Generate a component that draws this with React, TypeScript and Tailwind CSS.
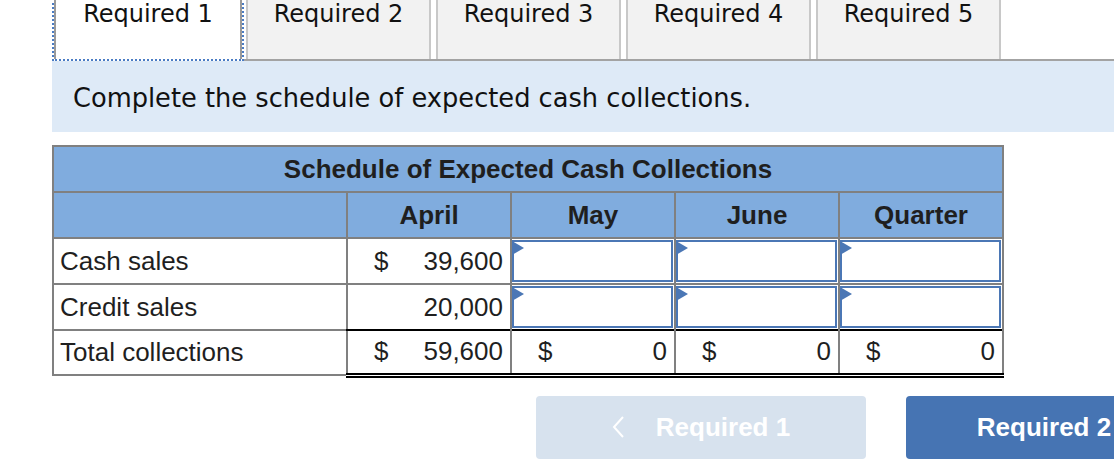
const tabs = ["Required 2", "Required 3", "Required 4", "Required 5"];
const months = ["April", "May", "June", "Quarter"];

const InputCell = () => (
  <td className="h-[46px] border-2 border-[#808080] p-0">
    <div className="relative mr-[1px] h-[42px] border-2 border-[#4b77b5] bg-white">
      <span className="absolute -left-[2px] -top-[1px] block h-0 w-0 border-y-[7px] border-l-[12px] border-y-transparent border-l-[#4b77b5]" />
    </div>
  </td>
);

const AmountCell = ({ dollar, value, total }: { dollar?: boolean; value: string; total?: boolean }) => (
  <td
    className={
      total
        ? "h-[45px] border-x-2 border-t-2 border-b-[5px] border-x-[#808080] border-t-black border-b-black border-double p-0"
        : "h-[46px] border-2 border-[#808080] p-0"
    }
  >
    <div className="flex items-center justify-between pl-[26px] pr-[7px]">
      <span>{dollar ? "$" : ""}</span>
      <span>{value}</span>
    </div>
  </td>
);

export default function App() {
  return (
    <div className="h-[466px] w-[1114px] overflow-hidden bg-white">
      <div className="w-[1236px] pl-[52px]">
        {/* tabs */}
        <div className="flex h-[61px] items-start font-['DejaVu_Sans',sans-serif] text-[24px] leading-[27px] text-[#111]">
          <div className="relative z-10 ml-[2px] h-[59px] w-[188px] border-x-2 border-[#9a9a9a] bg-white pt-[1px] text-center outline-2 outline-dotted outline-[#4a7cc4]">
            Required 1
          </div>
          <div className="flex h-[61px] flex-1 gap-[5px] border-b-2 border-[#a3a3a3] pl-[4px]">
            {tabs.map((t) => (
              <div key={t} className="h-full w-[185px] border-x-2 border-[#c8c8c8] bg-[#f2f2f2] pt-[1px] text-center">
                {t}
              </div>
            ))}
          </div>
        </div>

        {/* instruction */}
        <div className="flex h-[71px] items-center bg-[#deeaf7] pt-[3px] pl-[21px] font-['DejaVu_Sans',sans-serif] text-[25.7px] text-[#111]">
          Complete the schedule of expected cash collections.
        </div>

        {/* schedule */}
        <table className="mt-[13px] w-[950px] table-fixed border-collapse font-['Liberation_Sans',Arial,sans-serif] text-[26px] text-[#1f1f1f]">
          <colgroup>
            <col className="w-[294px]" />
            <col className="w-[164px]" />
            <col className="w-[164px]" />
            <col className="w-[164px]" />
            <col className="w-[164px]" />
          </colgroup>
          <tbody>
            <tr>
              <td colSpan={5} className="h-[46px] border-2 border-[#808080] bg-[#80acde] text-center font-bold">
                Schedule of Expected Cash Collections
              </td>
            </tr>
            <tr>
              <td className="h-[46px] border-2 border-[#808080] bg-[#80acde]" />
              {months.map((m) => (
                <td key={m} className="h-[46px] border-2 border-[#808080] bg-[#80acde] text-center font-bold">
                  {m}
                </td>
              ))}
            </tr>
            <tr>
              <td className="h-[46px] border-2 border-[#808080] pl-[6px]">Cash sales</td>
              <AmountCell dollar value="39,600" />
              <InputCell />
              <InputCell />
              <InputCell />
            </tr>
            <tr>
              <td className="h-[46px] border-2 border-[#808080] pl-[6px]">Credit sales</td>
              <AmountCell value="20,000" />
              <InputCell />
              <InputCell />
              <InputCell />
            </tr>
            <tr>
              <td className="h-[45px] border-2 border-[#808080] pl-[6px]">Total collections</td>
              <AmountCell dollar total value="59,600" />
              <AmountCell dollar total value="0" />
              <AmountCell dollar total value="0" />
              <AmountCell dollar total value="0" />
            </tr>
          </tbody>
        </table>

        {/* navigation */}
        <div className="mt-[18px] flex justify-end gap-[40px] font-['Liberation_Sans',Arial,sans-serif] text-[26px] font-bold text-white">
          <button className="flex h-[63px] w-[330px] items-center justify-center gap-[31px] rounded-[4px] bg-[#d7e2ee]">
            <svg width="13" height="22" viewBox="0 0 13 22" fill="none">
              <polyline points="11,1 2,11 11,21" stroke="white" strokeWidth="2" />
            </svg>
            <span>Required 1</span>
          </button>
          <button className="flex h-[63px] w-[330px] items-center justify-center gap-[41px] rounded-[4px] bg-[#4674b3]">
            <span>Required 2</span>
            <svg width="13" height="22" viewBox="0 0 13 22" fill="none">
              <polyline points="2,1 11,11 2,21" stroke="white" strokeWidth="2" />
            </svg>
          </button>
        </div>
      </div>
    </div>
  );
}
